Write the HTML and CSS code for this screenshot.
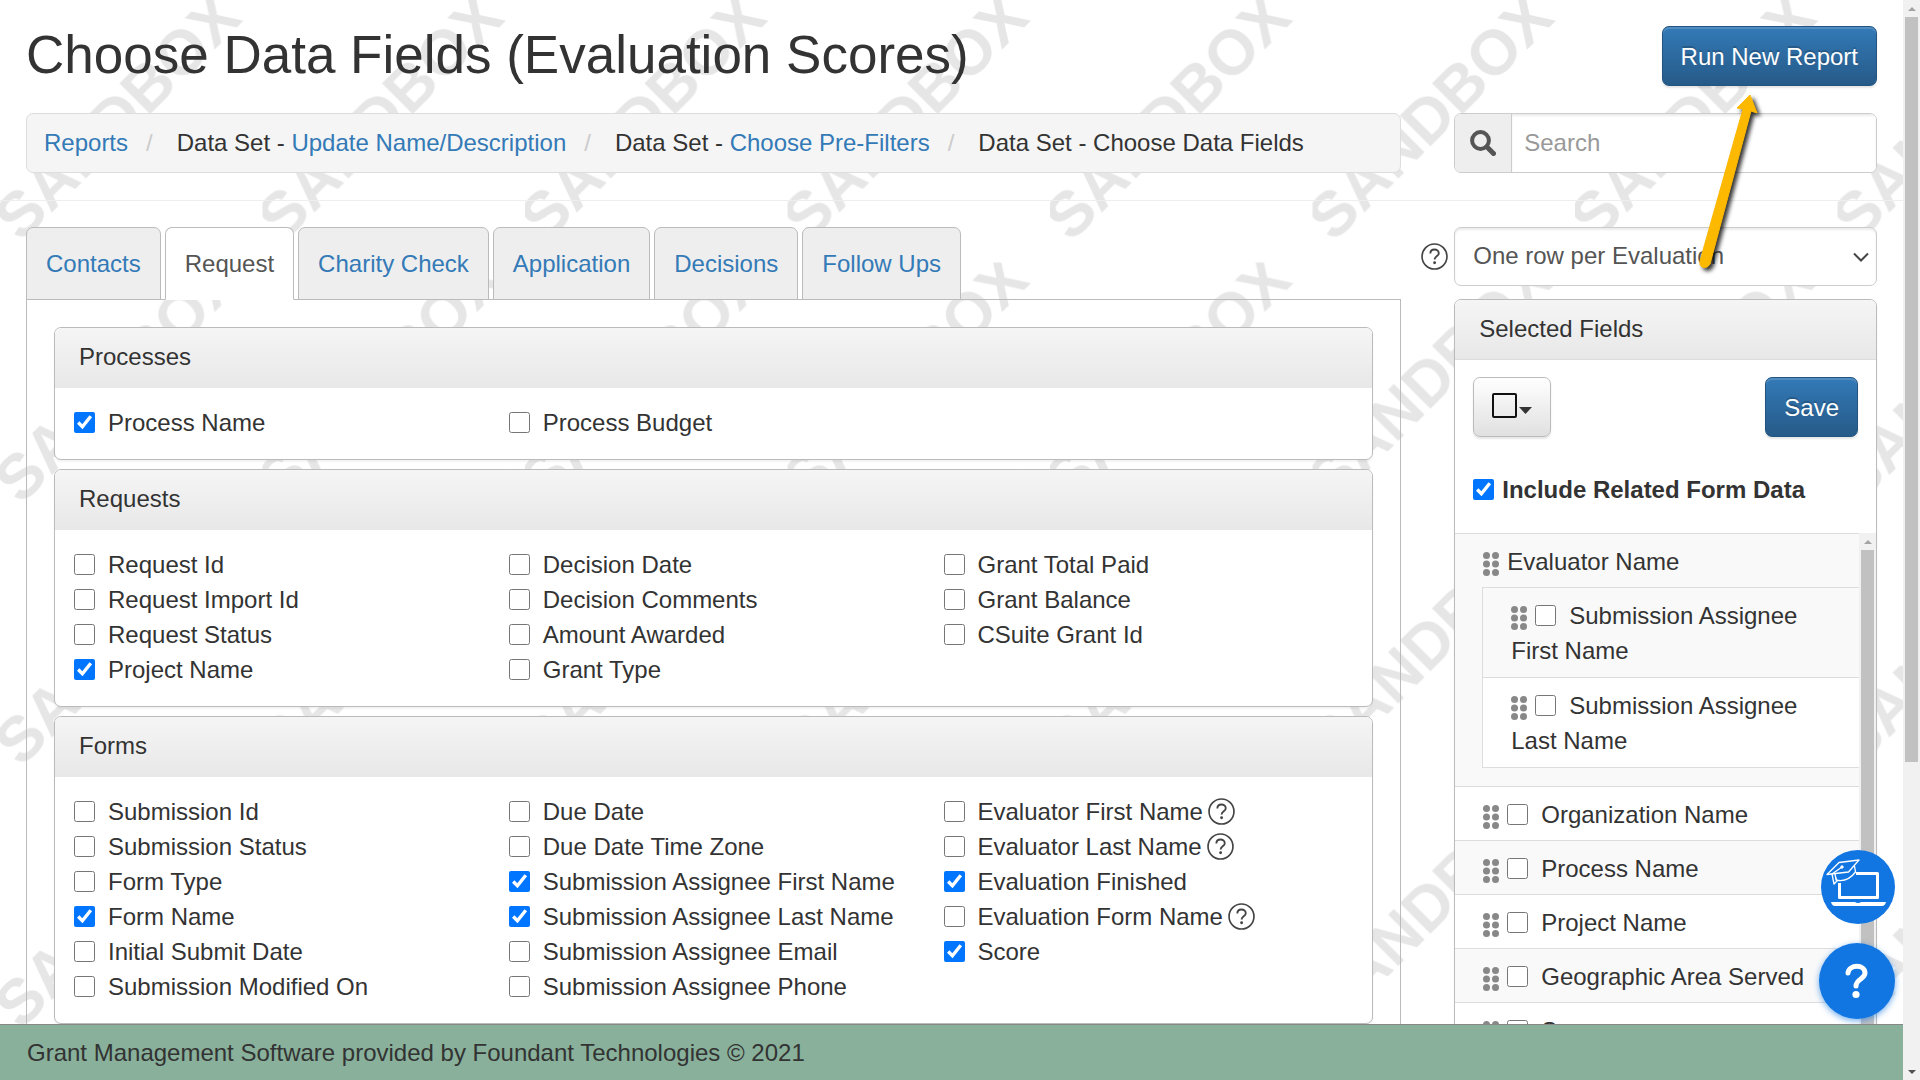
FILE: index.html
```
<!DOCTYPE html>
<html lang="en">

<head>
    <meta charset="UTF-8">
    <meta name="viewport" content="width=device-width, initial-scale=1.0">
    <title>Choose Data Fields</title>
    <link rel="stylesheet" href="styles.css">
</head>

<body>
    <!-- Icon shapes used more than once -->
    <svg class="defs" width="0" height="0" aria-hidden="true">
        <symbol id="help" viewBox="0 0 26 26">
            <circle cx="13" cy="13" r="12" fill="none" stroke="currentColor" stroke-width="1.6" />
            <path d="M9 10.2C9 7.6 10.8 6.3 13 6.3s4.1 1.4 4.1 3.5c0 3-4 3-4 6" fill="none" stroke="currentColor" stroke-width="1.8" />
            <circle cx="13.1" cy="19" r="1.4" fill="currentColor" />
        </symbol>
        <symbol id="grip" viewBox="0 0 16 24">
            <g fill="#888">
                <circle cx="3.5" cy="3.5" r="3.5" /><circle cx="12.5" cy="3.5" r="3.5" />
                <circle cx="3.5" cy="12" r="3.5" /><circle cx="12.5" cy="12" r="3.5" />
                <circle cx="3.5" cy="20.5" r="3.5" /><circle cx="12.5" cy="20.5" r="3.5" />
            </g>
        </symbol>
    </svg>

    <div class="page">
        <svg class="watermark" aria-hidden="true">
            <pattern id="sandbox" width="150" height="150" patternUnits="userSpaceOnUse" patternTransform="scale(1.75)">
                <text x="12" y="139" transform="rotate(-45 12 139)">SANDBOX</text>
            </pattern>
            <rect width="100%" height="100%" fill="url(#sandbox)" />
        </svg>

        <header class="page-header">
            <h1>Choose Data Fields (Evaluation Scores)</h1>
            <button type="button" class="btn btn-primary">Run New Report</button>
        </header>

        <div class="row">
            <div class="col-main">
                <ol class="breadcrumb">
                    <li><a href="#">Reports</a></li>
                    <li>Data Set - <a href="#">Update Name/Description</a></li>
                    <li>Data Set - <a href="#">Choose Pre-Filters</a></li>
                    <li>Data Set - Choose Data Fields</li>
                </ol>
            </div>
            <div class="col-side">
                <div class="input-group">
                    <label class="addon" for="search" aria-label="Search">
                        <svg width="26" height="26" viewBox="0 0 26 26">
                            <circle cx="10.5" cy="10.5" r="8.4" fill="none" stroke="#555" stroke-width="4" />
                            <path d="M17 17l6.5 6.5" stroke="#555" stroke-width="5" stroke-linecap="round" />
                        </svg>
                    </label>
                    <input type="text" id="search" placeholder="Search">
                </div>
            </div>
        </div>

        <hr>

        <div class="row">
            <main class="col-main">
                <nav class="tabs">
                    <a href="#">Contacts</a>
                    <a href="#" class="active">Request</a>
                    <a href="#">Charity Check</a>
                    <a href="#">Application</a>
                    <a href="#">Decisions</a>
                    <a href="#">Follow Ups</a>
                </nav>
                <div class="tab-content">
                    <section class="panel">
                        <h2>Processes</h2>
                        <div class="fields">
                            <div>
                                <label><input type="checkbox" checked>Process Name</label>
                            </div>
                            <div>
                                <label><input type="checkbox">Process Budget</label>
                            </div>
                        </div>
                    </section>
                    <section class="panel">
                        <h2>Requests</h2>
                        <div class="fields">
                            <div>
                                <label><input type="checkbox">Request Id</label>
                                <label><input type="checkbox">Request Import Id</label>
                                <label><input type="checkbox">Request Status</label>
                                <label><input type="checkbox" checked>Project Name</label>
                            </div>
                            <div>
                                <label><input type="checkbox">Decision Date</label>
                                <label><input type="checkbox">Decision Comments</label>
                                <label><input type="checkbox">Amount Awarded</label>
                                <label><input type="checkbox">Grant Type</label>
                            </div>
                            <div>
                                <label><input type="checkbox">Grant Total Paid</label>
                                <label><input type="checkbox">Grant Balance</label>
                                <label><input type="checkbox">CSuite Grant Id</label>
                            </div>
                        </div>
                    </section>
                    <section class="panel">
                        <h2>Forms</h2>
                        <div class="fields">
                            <div>
                                <label><input type="checkbox">Submission Id</label>
                                <label><input type="checkbox">Submission Status</label>
                                <label><input type="checkbox">Form Type</label>
                                <label><input type="checkbox" checked>Form Name</label>
                                <label><input type="checkbox">Initial Submit Date</label>
                                <label><input type="checkbox">Submission Modified On</label>
                            </div>
                            <div>
                                <label><input type="checkbox">Due Date</label>
                                <label><input type="checkbox">Due Date Time Zone</label>
                                <label><input type="checkbox" checked>Submission Assignee First Name</label>
                                <label><input type="checkbox" checked>Submission Assignee Last Name</label>
                                <label><input type="checkbox">Submission Assignee Email</label>
                                <label><input type="checkbox">Submission Assignee Phone</label>
                            </div>
                            <div>
                                <label><input type="checkbox">Evaluator First Name<svg class="help"><use href="#help" /></svg></label>
                                <label><input type="checkbox">Evaluator Last Name<svg class="help"><use href="#help" /></svg></label>
                                <label><input type="checkbox" checked>Evaluation Finished</label>
                                <label><input type="checkbox">Evaluation Form Name<svg class="help"><use href="#help" /></svg></label>
                                <label><input type="checkbox" checked>Score</label>
                            </div>
                        </div>
                    </section>
                </div>
            </main>

            <aside class="col-side">
                <div class="row-type">
                    <svg class="help"><use href="#help" /></svg>
                    <select aria-label="Rows in report">
                        <option>One row per Evaluation</option>
                    </select>
                    <svg class="chevron" width="16" height="10" viewBox="0 0 16 10">
                        <path d="M1 1.5l7 7 7-7" fill="none" stroke="#444" stroke-width="2" />
                    </svg>
                </div>

                <section class="panel selected">
                    <h2>Selected Fields</h2>
                    <div class="toolbar">
                        <button type="button" class="btn btn-default" aria-label="Select fields">
                            <svg width="40" height="28" viewBox="0 0 40 28">
                                <rect x="1" y="1" width="23" height="23" rx="1" fill="none" stroke="#111" stroke-width="2" />
                                <path d="M27 14h13l-6.500 7z" fill="#333" />
                            </svg>
                        </button>
                        <button type="button" class="btn btn-primary">Save</button>
                    </div>
                    <label class="include"><input type="checkbox" checked>Include Related Form Data</label>
                    <div class="list-wrap">
                        <ul class="list">
                            <li class="group">
                                <svg class="grip"><use href="#grip" /></svg><span>Evaluator Name</span>
                                <ul>
                                    <li><svg class="grip"><use href="#grip" /></svg><label><input type="checkbox">Submission Assignee First Name</label></li>
                                    <li><svg class="grip"><use href="#grip" /></svg><label><input type="checkbox">Submission Assignee Last Name</label></li>
                                </ul>
                            </li>
                            <li><svg class="grip"><use href="#grip" /></svg><label><input type="checkbox">Organization Name</label></li>
                            <li><svg class="grip"><use href="#grip" /></svg><label><input type="checkbox">Process Name</label></li>
                            <li><svg class="grip"><use href="#grip" /></svg><label><input type="checkbox">Project Name</label></li>
                            <li><svg class="grip"><use href="#grip" /></svg><label><input type="checkbox">Geographic Area Served</label></li>
                            <li><svg class="grip"><use href="#grip" /></svg><label><input type="checkbox">Score</label></li>
                        </ul>
                        <div class="scrollbar">
                            <i class="up"></i>
                            <div class="thumb thumb-full"></div>
                        </div>
                    </div>
                </section>
            </aside>
        </div>

        <!-- Arrow pointing at the report button -->
        <svg class="pointer" width="80" height="190" viewBox="0 0 80 190" aria-hidden="true">
            <path d="M60 10L67 28 61 26 20 179Q17 184 12 182 9 180 10 176L53 24 47 23Z" fill="#fcb900" stroke="#fcb900" stroke-width="1" stroke-linejoin="round" />
        </svg>

        <div class="floating">
            <a href="#" class="training" aria-label="Training">
                <svg width="74" height="74" viewBox="0 0 74 74" fill="none" stroke="#fff" stroke-linejoin="round">
                    <path d="M18.500 33v14.500h38v-24H35" stroke-width="3" />
                    <path d="M10 52h24q1 1 3 1t3-1h25q-1 4-4 4H14q-3 0-4-4z" fill="#fff" stroke="none" />
                    <path d="M6 24.500L18 12.500 38 10 27.500 22Z" stroke-width="1.300" />
                    <path d="M14 23.500l1 6.500q11 3 19.500-8l-1-6M21 17l-10 7 2 10 3-3-2-6" stroke-width="1.300" />
                    <circle cx="21" cy="17" r="1.200" fill="#fff" />
                </svg>
            </a>
            <a href="#" class="support" aria-label="Help">
                <svg width="76" height="76" viewBox="0 0 76 76" fill="none">
                    <path d="M29 30c1-9 17-9 17 0 0 6-9 6-9 13" stroke="#fff" stroke-width="5" stroke-linecap="round" />
                    <circle cx="37" cy="51.500" r="3.600" fill="#fff" />
                </svg>
            </a>
        </div>

        <footer>Grant Management Software provided by Foundant Technologies © 2021</footer>
    </div>

    <div class="scrollbar">
        <i class="up"></i>
        <div class="thumb"></div>
        <i class="down"></i>
    </div>
</body>

</html>
```
FILE: styles.css
```
* {
    box-sizing: border-box;
}

body {
    display: flex;
    height: 100vh;
    margin: 0;
    overflow: hidden;
    background-color: #fff;
    color: #333;
    font-family: "Liberation Sans", Arial, sans-serif;
    font-size: 24px;
    line-height: 35px;
}

a {
    color: #337ab7;
    text-decoration: none;
}

h1,
h2,
ul,
ol {
    margin: 0;
    padding: 0;
    font-weight: normal;
    list-style: none;
}

input,
select,
button {
    margin: 0;
    font: inherit;
}

.defs {
    position: absolute;
}

.page {
    position: relative;
    flex: 1;
    overflow: hidden;
}

.watermark {
    position: absolute;
    width: 100%;
    height: 100%;
    z-index: -1;
}

.watermark text {
    fill: #e6e6e6;
    font-size: 36px;
    font-weight: bold;
}

.page-header {
    display: flex;
    justify-content: space-between;
    align-items: flex-start;
    padding: 26px 26px 27px;
}

h1 {
    font-size: 53px;
    line-height: 58px;
}

.btn {
    height: 60px;
    padding: 0 18px;
    border: 1px solid #245580;
    border-radius: 7px;
}

.btn-primary {
    background: linear-gradient(#337ab7, #265a88);
    box-shadow: inset 0 2px 0 rgba(255, 255, 255, 0.15), 0 2px 2px rgba(0, 0, 0, 0.1);
    color: #fff;
    text-shadow: 0 -2px 0 rgba(0, 0, 0, 0.2);
}

.btn-default {
    border-color: #bbb;
    background: linear-gradient(#fff, #e0e0e0);
    box-shadow: 0 2px 2px rgba(0, 0, 0, 0.1);
}

.btn svg {
    display: block;
}

.row {
    display: grid;
    grid-template-columns: 3fr 1fr;
}

.col-main,
.col-side {
    min-width: 0;
    padding: 0 26px;
}

.col-side {
    padding-left: 27px;
}

.breadcrumb {
    display: flex;
    height: 60px;
    padding: 11px 17px;
    border: 1px solid #ddd;
    border-radius: 7px;
    background-color: #f5f5f5;
}

.breadcrumb li + li::before {
    content: "/";
    padding: 0 24px 0 18px;
    color: #ccc;
}

.input-group {
    display: flex;
    height: 60px;
    border: 1px solid #ccc;
    border-radius: 7px;
    background-color: #fff;
    overflow: hidden;
}

.addon {
    display: flex;
    align-items: center;
    padding: 0 15px;
    border-right: 1px solid #ccc;
    background-color: #eee;
}

.input-group input {
    flex: 1;
    min-width: 0;
    padding: 0 12px 2px;
    border: 0;
    box-shadow: inset 0 2px 2px rgba(0, 0, 0, 0.075);
}

.input-group input::placeholder {
    color: #999;
}

hr {
    margin: 27px 0 26px;
    border: 0;
    border-top: 1px solid #eee;
}

.tabs {
    display: flex;
    gap: 4px;
    margin-bottom: -1px;
}

.tabs a {
    height: 73px;
    padding: 18px 19px;
    border: 1px solid #bbb;
    border-radius: 7px 7px 0 0;
    background-color: #eee;
}

.tabs .active {
    border-bottom-color: #fff;
    background-color: #fff;
    color: #555;
}

.tab-content {
    padding: 27px;
    border: 1px solid #bbb;
}

.panel {
    margin-bottom: 9px;
    border: 1px solid #bbb;
    border-radius: 7px;
    background-color: #fff;
    box-shadow: 0 2px 2px rgba(0, 0, 0, 0.05);
    overflow: hidden;
}

h2 {
    height: 60px;
    padding: 11px 24px;
    background: linear-gradient(#f5f5f5, #e8e8e8);
    font-size: 24px;
}

.fields {
    display: grid;
    grid-template-columns: repeat(3, 1fr);
    column-gap: 6px;
    padding: 17px 0 19px 19px;
}

.fields label,
.include {
    display: flex;
    align-items: center;
}

input[type="checkbox"] {
    width: 21px;
    height: 21px;
    accent-color: #0075ff;
}

.fields input {
    margin-right: 13px;
}

.help {
    width: 27px;
    height: 27px;
    margin-left: 5px;
    color: #444;
}

.row-type {
    display: flex;
    position: relative;
    align-items: center;
    margin: 0 0 13px -38px;
}

.row-type .help {
    flex: none;
    margin: 0 6px 0 5px;
}

select {
    flex: 1;
    height: 59px;
    padding: 0 18px 2px;
    border: 1px solid #ccc;
    border-radius: 7px;
    appearance: none;
    background-color: #fff;
    box-shadow: inset 0 2px 2px rgba(0, 0, 0, 0.075);
    color: #555;
}

.chevron {
    position: absolute;
    right: 8px;
}

.selected h2 {
    border-bottom: 1px solid #ddd;
}

.toolbar {
    display: flex;
    justify-content: space-between;
    padding: 17px 18px;
}

.include {
    gap: 8px;
    padding: 18px 18px 26px;
    font-weight: bold;
}

.list-wrap {
    display: flex;
}

.list {
    flex: 1;
    min-width: 0;
}

.list li {
    padding: 10px 0 8px 28px;
    border-top: 1px solid #ddd;
    background-color: #fff;
}

.list > li:nth-child(odd),
.list li li:nth-child(odd) {
    background-color: #f9f9f9;
}

.list .group {
    padding-bottom: 18px;
}

.list ul {
    margin: 8px 0 0 -1px;
    border: 1px solid #ddd;
    border-width: 0 0 1px 1px;
}

.list li li {
    padding: 10px 17px 9px 28px;
}

.grip {
    width: 16px;
    height: 24px;
    margin-right: 8px;
    vertical-align: -6px;
}

.list input {
    margin-right: 13px;
    vertical-align: -2px;
}

/* Scrollbars */
.scrollbar {
    display: flex;
    flex-direction: column;
    align-items: center;
    width: 17px;
    background-color: #f1f1f1;
}

.scrollbar i {
    margin: 7px 0 6px;
    border: 4px solid transparent;
}

.scrollbar .up {
    border-top: 0;
    border-bottom-color: #a3a3a3;
}

.scrollbar .down {
    margin-top: auto;
    border-top-color: #505050;
    border-bottom: 0;
}

.thumb {
    width: 13px;
    height: 69%;
    background-color: #c1c1c1;
}

.thumb-full {
    flex: 1;
}

.pointer {
    position: absolute;
    top: 85px;
    right: 133px;
    filter: drop-shadow(3px 3px 2px rgba(0, 0, 0, 0.8));
}

.floating {
    display: flex;
    position: absolute;
    right: 8px;
    bottom: 61px;
    flex-direction: column;
    align-items: flex-end;
    gap: 19px;
}

.floating a {
    border-radius: 50%;
    background-color: #1276e2;
}

.floating svg {
    display: block;
}

.support {
    box-shadow: 0 2px 6px rgba(18, 118, 226, 0.6);
}

footer {
    position: absolute;
    right: 0;
    bottom: 0;
    left: 0;
    height: 56px;
    padding: 10px 27px;
    border-top: 1px solid #888;
    background-color: #88b09a;
}
```
